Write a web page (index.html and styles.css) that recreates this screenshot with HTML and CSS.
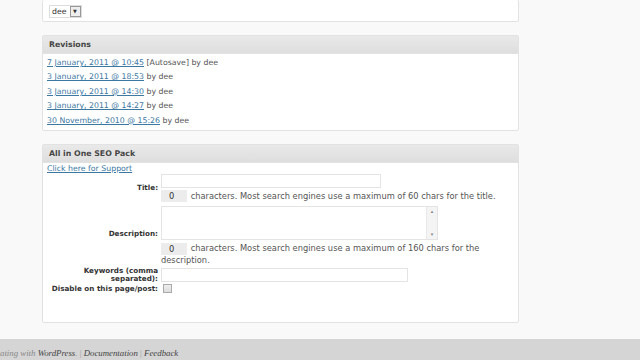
FILE: index.html
```html
<!DOCTYPE html>
<html lang="en">
<head>
    <meta charset="UTF-8">
    <title>Edit Post</title>
    <link rel="stylesheet" href="styles.css">
</head>
<body>
    <div id="post-body">
        <div class="postbox author-box">
            <div class="inside">
                <span class="select">dee<span class="select-arrow">&#9660;</span></span>
            </div>
        </div>

        <div class="postbox">
            <h3 class="hndle">Revisions</h3>
            <ul class="revisions">
                <li><a href="#">7 January, 2011 @ 10:45</a> [Autosave] by dee</li>
                <li><a href="#">3 January, 2011 @ 18:53</a> by dee</li>
                <li><a href="#">3 January, 2011 @ 14:30</a> by dee</li>
                <li><a href="#">3 January, 2011 @ 14:27</a> by dee</li>
                <li><a href="#">30 November, 2010 @ 15:26</a> by dee</li>
            </ul>
        </div>

        <div class="postbox seo-box">
            <h3 class="hndle">All in One SEO Pack</h3>
            <div class="inside">
                <a href="#" class="support">Click here for Support</a>

                <div class="seo-form">
                    <div class="seo-label">Title:</div>
                    <div class="seo-field">
                        <div class="text-input title-input"></div>
                        <div class="count-line">
                            <span class="counter">0</span>
                            characters. Most search engines use a maximum of 60 chars for the title.
                        </div>
                    </div>

                    <div class="seo-label">Description:</div>
                    <div class="seo-field desc-field">
                        <div class="textarea">
                            <div class="scroll">
                                <span>&#9652;</span>
                                <span>&#9662;</span>
                            </div>
                        </div>
                        <div class="count-line">
                            <span class="counter">0</span>
                            characters. Most search engines use a maximum of 160 chars for the description.
                        </div>
                    </div>

                    <div class="seo-label">Keywords (comma separated):</div>
                    <div class="seo-field">
                        <div class="text-input keywords-input"></div>
                    </div>

                    <div class="seo-label">Disable on this page/post:</div>
                    <div class="seo-field">
                        <span class="checkbox"></span>
                    </div>
                </div>
            </div>
        </div>
    </div>

    <div id="footer">
        <span class="thanks">ating with <a href="#">WordPress</a>.</span>
        <span class="sep">|</span>
        <a href="#">Documentation</a>
        <span class="sep">|</span>
        <a href="#">Feedback</a>
    </div>
</body>
</html>
```

FILE: styles.css
```css
body {
    margin: 0;
    background-color: #f9f9f9;
    font-family: "DejaVu Sans", Verdana, sans-serif;
    font-size: 7.8px;
    color: #555;
    height: 360px;
    overflow: hidden;
}

a {
    color: #3d78a3;
}

#post-body {
    padding-left: 42px;
    width: 477px;
}

.postbox {
    background-color: #fff;
    border: 1px solid #e2e2e2;
    border-radius: 2px;
    margin-bottom: 13px;
}

.hndle {
    margin: 0;
    height: 17px;
    line-height: 17px;
    padding-left: 6px;
    font-size: 7.8px;
    font-weight: bold;
    color: #464646;
    background: linear-gradient(#e9e9e9, #dedede);
    border-bottom: 1px solid #e2e2e2;
}

.author-box {
    border-top: none;
    height: 21px;
}

.author-box .inside {
    padding: 5px 0 0 6px;
}

.select {
    display: inline-flex;
    align-items: center;
    height: 11px;
    border: 1px solid #ddd;
    padding-left: 2px;
    color: #333;
}

.select-arrow {
    margin-left: 3px;
    width: 9px;
    height: 9px;
    border: 1px solid #999;
    font-size: 5px;
    line-height: 9px;
    text-align: center;
    background-color: #eee;
}

.revisions {
    list-style: none;
    margin: 0;
    padding: 2px 0 2px 4px;
}

.revisions li {
    line-height: 14.4px;
}

.seo-box {
    margin-bottom: 0;
}

.seo-box .inside {
    padding: 1px 0 27px 4px;
}

.support {
    display: block;
    line-height: 10px;
}

.seo-form {
    display: grid;
    grid-template-columns: 111px 340px;
    column-gap: 3px;
    align-items: center;
}

.seo-label {
    text-align: right;
    font-weight: bold;
    font-size: 7.2px;
    color: #333;
    line-height: 8px;
}

.seo-field {
    font-size: 8.3px;
    line-height: 12px;
}

.desc-field {
    padding-top: 4px;
    line-height: 11.5px;
}

.desc-field .count-line {
    margin-top: 3px;
}

.text-input {
    height: 12px;
    border: 1px solid #e4e4e4;
    background-color: #fff;
}

.title-input {
    width: 218px;
}

.keywords-input {
    width: 245px;
}

.count-line {
    margin-top: 2px;
}

.counter {
    display: inline-block;
    vertical-align: top;
    width: 18px;
    height: 12px;
    padding-left: 8px;
    margin-right: 1px;
    line-height: 12px;
    background-color: #ececec;
    color: #333;
}

.textarea {
    width: 275px;
    height: 32px;
    border: 1px solid #e4e4e4;
    display: flex;
    justify-content: flex-end;
}

.scroll {
    width: 10px;
    border-left: 1px solid #e8e8e8;
    background-color: #f4f4f4;
    display: flex;
    flex-direction: column;
    justify-content: space-between;
    align-items: center;
    font-size: 5px;
    line-height: 9px;
    color: #888;
}

.checkbox {
    display: inline-block;
    vertical-align: top;
    width: 7px;
    height: 7px;
    margin: 1px 0 0 2px;
    border: 1px solid #aaa;
    background: linear-gradient(#eee, #ddd);
}

#footer {
    margin-top: 16px;
    height: 30px;
    padding-top: 9px;
    box-sizing: border-box;
    background-color: #d5d5d5;
    font-family: "Liberation Serif", Georgia, serif;
    font-style: italic;
    font-size: 8.8px;
    color: #888;
}

#footer a {
    color: #444;
    text-decoration: none;
}

#footer .sep {
    color: #999;
    font-style: normal;
}
```
